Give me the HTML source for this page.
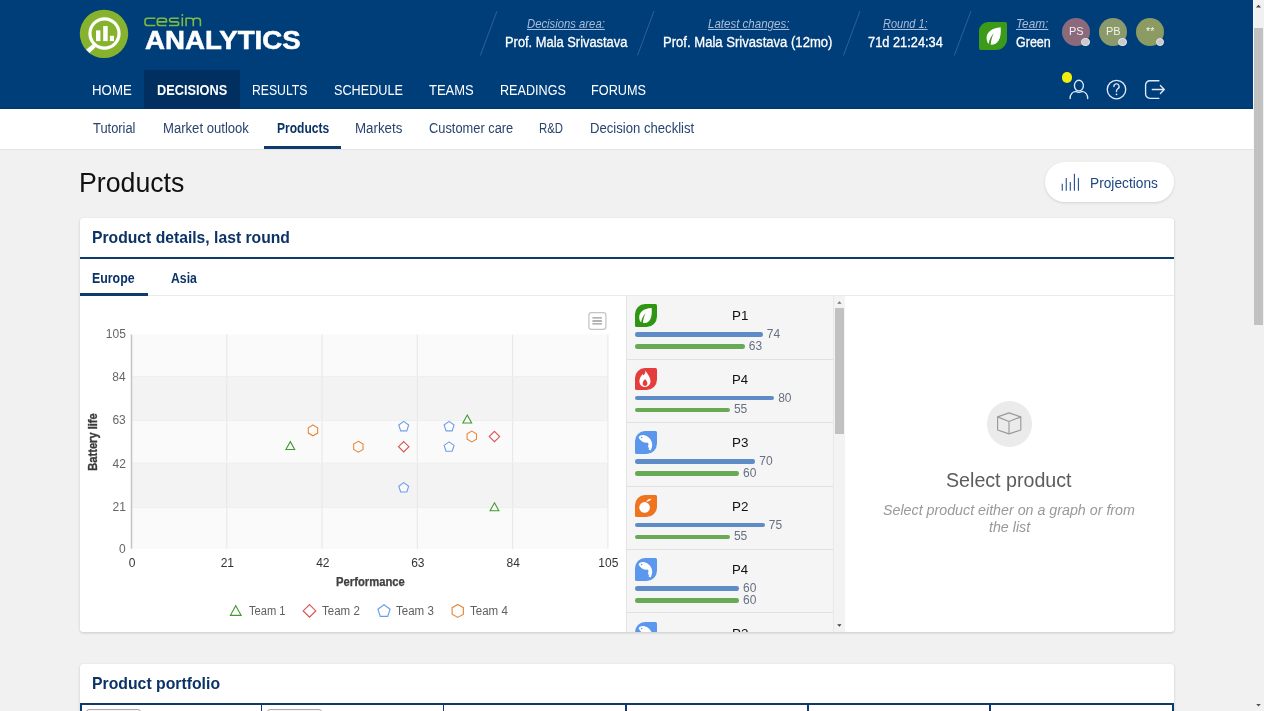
<!DOCTYPE html>
<html><head><meta charset="utf-8"><title>Products</title>
<style>
html,body{margin:0;padding:0}
body{width:1264px;height:711px;overflow:hidden;background:#f1f1f1;font-family:"Liberation Sans",sans-serif;position:relative}
.t{position:absolute;white-space:pre;line-height:1;z-index:5}
.a{position:absolute}
.card{position:absolute;background:#fff;border-radius:3px;box-shadow:0 1px 3px rgba(0,0,0,.16),0 0 1px rgba(0,0,0,.10)}
.it{position:absolute;left:0;width:206px;height:63.6px;background:#f5f5f5}
.sep{position:absolute;left:0;width:206px;top:62.75px;height:1.1px;background:#e1e1e1;z-index:3}
.ico{position:absolute;left:8px;top:8.4px;width:22px;height:22.5px;border-radius:10px 1.5px 10.5px 1.5px;overflow:hidden}
.ico svg{display:block}
.bar{position:absolute;left:8px;height:4.6px;border-radius:2.3px}
.av{position:absolute;border-radius:50%}
.dot{position:absolute;width:6.8px;height:6.8px;border-radius:50%;background:#cbc9c9;border:1.4px solid #e2e5ec}
#w{position:absolute;left:0;top:0;width:1264px;height:711px;overflow:hidden;will-change:transform}
</style></head><body>
<div id="w">
<!-- header -->
<div class="a" style="left:0;top:0;width:1253px;height:109px;background:#003e7a"></div>
<div class="a" style="left:0;top:108.2px;width:1253px;height:0.8px;background:#00336a"></div>
<div class="a" style="left:143.75px;top:70px;width:95.75px;height:39px;background:#012f60"></div>
<div class="a" style="left:0;top:109px;width:1253px;height:40px;background:#fff;box-shadow:0 1px 1px rgba(0,0,0,.05)"></div>
<div class="a" style="left:263.75px;top:146px;width:77.5px;height:3px;background:#0f3a6e"></div>
<!-- logo -->
<svg class="a" style="left:76px;top:6px" width="230" height="56" viewBox="76 6 230 56">
<circle cx="104" cy="33.85" r="24.2" fill="#86b22e"/>
<path d="M92.8 44.3L86.2 49.6L89.6 53L95.6 47.2Z" fill="#fff"/>
<circle cx="104.5" cy="33.5" r="14.55" fill="none" stroke="#fff" stroke-width="3.2"/>
<rect x="96" y="30.4" width="4.4" height="10.7" fill="#fff"/>
<rect x="103.2" y="26" width="4.5" height="15.1" fill="#fff"/>
<rect x="109.9" y="35.8" width="4.1" height="5.3" fill="#fff"/>
<g fill="none" stroke="#7cbb40" stroke-width="1.6" stroke-linecap="butt" stroke-linejoin="round">
<path d="M155.400 18.200H147.600a2.600 2.600 0 0 0-2.600 2.600v2.100a2.600 2.600 0 0 0 2.600 2.600H155.400"/>
<path d="M157.300 21.850H166.500V20.800a2.600 2.600 0 0 0-2.600-2.600h-4a2.600 2.600 0 0 0-2.600 2.600v2.100a2.600 2.600 0 0 0 2.600 2.600h6.600"/>
<path d="M178.800 18.200h-7.400a1.825 1.825 0 0 0 0 3.650h5.400a1.825 1.825 0 0 1 0 3.650h-7.800"/>
<path d="M182.300 17.400V26.300"/>
<path d="M186.100 26.300V18.200h4.700a2.500 2.500 0 0 1 2.500 2.500V26.300M193.300 20.700a2.500 2.500 0 0 1 2.500-2.500h2.100a2.500 2.500 0 0 1 2.500 2.500V26.300"/>
</g>
<circle cx="182.300" cy="14.900" r="1" fill="#7cbb40"/>
</svg>
<!-- separators -->
<svg class="a" style="left:470px;top:5px" width="520" height="60" viewBox="470 5 520 60">
<g stroke="#2f5f9a" stroke-width="1" fill="none">
<path d="M497 11L480.300 55.500"/><path d="M654 11L637.500 55.500"/><path d="M860 11L843.500 55.500"/><path d="M971 11L954.300 55.500"/>
</g></svg>
<!-- team leaf -->
<div class="a" style="left:978.7px;top:22.1px;width:28.2px;height:27.8px;background:#3c9a1a;border-radius:9px 2px 11px 2px"></div>
<svg class="a" style="left:978.7px;top:22.1px" width="28.2" height="27.8" viewBox="0 0 28.2 27.8">
<path d="M21.700 5.200C12.500 6 7.400 10.500 7.600 16.400c.1 2.200 .9 4.200 2 5.600 .7-4.400 2.600-8.200 5.400-11-1.900 3.300-3 7.200-3.300 11.700 6.800 .3 10.900-5.300 10-17.500z" fill="#fff"/>
</svg>
<!-- avatars -->
<div class="av" style="left:1061.7px;top:18px;width:27.9px;height:27.9px;background:#8b6a7b"></div>
<div class="av" style="left:1098.9px;top:18px;width:27.9px;height:27.9px;background:#8b9a6a"></div>
<div class="av" style="left:1136.1px;top:18px;width:27.9px;height:27.9px;background:#8b9b62"></div>
<div class="dot" style="left:1081.2px;top:37.6px"></div>
<div class="dot" style="left:1118.4px;top:37.6px"></div>
<div class="dot" style="left:1155.6px;top:37.6px"></div>
<!-- right icons -->
<div class="a" style="left:1061.7px;top:72.05px;width:10.5px;height:10.5px;border-radius:50%;background:#f1ee0c"></div>
<svg class="a" style="left:1060px;top:70px" width="112" height="36" viewBox="1060 70 112 36">
<g fill="none" stroke="#dfe9f8" stroke-width="1.350" stroke-linecap="round" stroke-linejoin="round">
<ellipse cx="1078.900" cy="85.600" rx="4.500" ry="5.300"/>
<path d="M1070.100 98.600c0-4.200 2.600-7 5.800-7.300 1 .8 2 1.100 3 1.100s2-.3 3-1.100c3.200 .3 5.800 3.100 5.800 7.300"/>
<circle cx="1116.500" cy="89.550" r="9.250"/>
<path d="M1113.900 86.500a2.600 2.600 0 1 1 3.900 2.250c-.9 .55-1.300 1.100-1.300 2.100v.6"/>
<path d="M1158.900 80.700h-9a4.300 4.300 0 0 0-4.300 4.300v9a4.300 4.300 0 0 0 4.300 4.300h9"/>
<path d="M1152.300 89.500h11.600M1160.400 85.500l3.900 4-3.900 4"/>
</g>
<circle cx="1116.500" cy="94.300" r=".9" fill="#dfe9f8"/>
</svg>
<!-- page scrollbar -->
<div class="a" style="left:1253px;top:0;width:11px;height:711px;background:#f1f1f1"></div>
<div class="a" style="left:1253px;top:0;width:1px;height:149px;background:#f9f9f9"></div>
<div class="a" style="left:1254.400px;top:27.600px;width:8.600px;height:297.200px;background:#c1c1c1"></div>
<svg class="a" style="left:1253px;top:0" width="11" height="711" viewBox="0 0 11 711"><path d="M3 7.400L5.500 4.700L8 7.400Z" fill="#404040"/><path d="M3.200 704L5.500 706.500L7.800 704Z" fill="#505050"/></svg>
<!-- projections button -->
<div class="a" style="left:1045px;top:162.250px;width:128.700px;height:40px;border-radius:20px;background:#fff;box-shadow:0 1px 3px rgba(0,0,0,.13)"></div>
<svg class="a" style="left:1058px;top:170px" width="24" height="24" viewBox="1058 170 24 24"><g stroke="#244f8a" stroke-width="1.100" fill="none">
<path d="M1062.250 183.800V190.700M1066.250 178V190.700M1070.300 181.900V190.700M1074.400 173.800V190.700M1078.400 178V190.700"/></g></svg>
<!-- card 1 -->
<div class="card" style="left:80px;top:217.600px;width:1093.600px;height:414px"></div>
<div class="a" style="left:80px;top:257px;width:1093.600px;height:2.200px;background:#0f3a6e"></div>
<div class="a" style="left:80px;top:295.100px;width:1093.600px;height:1px;background:#eaeaea"></div>
<div class="a" style="left:80px;top:293px;width:67.500px;height:2.600px;background:#0f3a6e"></div>
<div class="a" style="left:626px;top:296px;width:1px;height:335.600px;background:#e4e4e4"></div>
<!-- chart -->
<svg class="a" style="left:80px;top:296px" width="546" height="335" viewBox="80 296 546 335">
<rect x="131.5" y="334.5" width="476.75" height="42.0" fill="#fafafa"/>
<rect x="131.5" y="376.5" width="476.75" height="44.0" fill="#f3f3f3"/>
<rect x="131.5" y="420.5" width="476.75" height="42.5" fill="#fafafa"/>
<rect x="131.5" y="463" width="476.75" height="44.5" fill="#f3f3f3"/>
<rect x="131.5" y="507.5" width="476.75" height="41.25" fill="#fafafa"/>
<rect x="226.28" y="334.5" width="1" height="214.25" fill="#e7e7e7"/>
<rect x="321.56" y="334.5" width="1" height="214.25" fill="#e7e7e7"/>
<rect x="416.84" y="334.5" width="1" height="214.25" fill="#e7e7e7"/>
<rect x="512.12" y="334.5" width="1" height="214.25" fill="#e7e7e7"/>
<rect x="607.40" y="334.5" width="1" height="214.25" fill="#e7e7e7"/>
<rect x="131.5" y="376.0" width="476.75" height="1" fill="#efefef"/>
<rect x="131.5" y="420.0" width="476.75" height="1" fill="#efefef"/>
<rect x="131.5" y="462.5" width="476.75" height="1" fill="#efefef"/>
<rect x="131.5" y="507.0" width="476.75" height="1" fill="#efefef"/>
<rect x="130.75" y="334.5" width="1.5" height="214.25" fill="#c4c4c4"/>
<path d="M290.30 441.63L294.67 449.54L285.93 449.54Z" fill="#fff" fill-opacity="0.6" stroke="#3f9a2f" stroke-width="1.1" stroke-linejoin="miter"/>
<path d="M467.25 415.10L471.62 423.01L462.88 423.01Z" fill="#fff" fill-opacity="0.6" stroke="#3f9a2f" stroke-width="1.1" stroke-linejoin="miter"/>
<path d="M494.47 502.84L498.84 510.75L490.10 510.75Z" fill="#fff" fill-opacity="0.6" stroke="#3f9a2f" stroke-width="1.1" stroke-linejoin="miter"/>
<path d="M403.73 441.53L408.93 446.73L403.73 451.93L398.53 446.73Z" fill="#fff" fill-opacity="0.6" stroke="#d9534f" stroke-width="1.1"/>
<path d="M494.47 431.32L499.67 436.52L494.47 441.72L489.27 436.52Z" fill="#fff" fill-opacity="0.6" stroke="#d9534f" stroke-width="1.1"/>
<path d="M403.73 421.42L408.67 425.01L406.79 430.83L400.67 430.83L398.78 425.01Z" fill="#fff" fill-opacity="0.6" stroke="#6d9eeb" stroke-width="1.1"/>
<path d="M449.10 421.42L454.05 425.01L452.16 430.83L446.04 430.83L444.15 425.01Z" fill="#fff" fill-opacity="0.6" stroke="#6d9eeb" stroke-width="1.1"/>
<path d="M449.10 441.83L454.05 445.42L452.16 451.23L446.04 451.23L444.15 445.42Z" fill="#fff" fill-opacity="0.6" stroke="#6d9eeb" stroke-width="1.1"/>
<path d="M403.73 482.64L408.67 486.23L406.79 492.04L400.67 492.04L398.78 486.23Z" fill="#fff" fill-opacity="0.6" stroke="#6d9eeb" stroke-width="1.1"/>
<path d="M312.99 425.00L317.66 427.70L317.66 433.10L312.99 435.80L308.31 433.10L308.31 427.70Z" fill="#fff" fill-opacity="0.6" stroke="#e8873a" stroke-width="1.1"/>
<path d="M358.36 441.33L363.03 444.03L363.03 449.43L358.36 452.13L353.68 449.43L353.68 444.03Z" fill="#fff" fill-opacity="0.6" stroke="#e8873a" stroke-width="1.1"/>
<path d="M471.79 431.12L476.46 433.82L476.46 439.22L471.79 441.92L467.11 439.22L467.11 433.82Z" fill="#fff" fill-opacity="0.6" stroke="#e8873a" stroke-width="1.1"/>
<path d="M235.75 605.70L241.07 615.33L230.43 615.33Z" fill="#fff" fill-opacity="0.6" stroke="#3f9a2f" stroke-width="1.15" stroke-linejoin="miter"/>
<path d="M309.50 604.60L315.80 610.90L309.50 617.20L303.20 610.90Z" fill="#fff" fill-opacity="0.6" stroke="#d9534f" stroke-width="1.15"/>
<path d="M384.00 604.80L390.09 609.22L387.76 616.38L380.24 616.38L377.91 609.22Z" fill="#fff" fill-opacity="0.6" stroke="#6d9eeb" stroke-width="1.15"/>
<path d="M457.75 604.40L463.38 607.65L463.38 614.15L457.75 617.40L452.12 614.15L452.12 607.65Z" fill="#fff" fill-opacity="0.6" stroke="#e8873a" stroke-width="1.15"/>
<rect x="588.900" y="312.600" width="17" height="16.800" rx="2.600" fill="#fff" stroke="#c4c4c4" stroke-width="1.200"/>
<path d="M592.400 317.900h9.500M592.400 321h9.500M592.400 323.900h9.500" stroke="#999" stroke-width="1.300"/>
</svg>
<div class="t" style="left:92.8px;top:441.5px;width:0;height:0;overflow:visible"><span id="bl" style="position:absolute;white-space:pre;font-size:12px;font-weight:700;color:#3a3a3a;-webkit-text-stroke:0.35px #3a3a3a;line-height:1;transform:translate(-50%,-50%) rotate(-90deg) scaleX(0.925);display:block">Battery life</span></div>
<!-- list -->
<div class="a" style="left:627px;top:296px;width:206px;height:335.600px;overflow:hidden;background:#f5f5f5">
<div class="it" style="top:0.00px">
<div class="ico" style="background:#2e9612"><svg width="22" height="22.5" viewBox="0 0 22 22.5"><g transform="translate(-1.6,-1.1) scale(1.1)"><path d="M16.6 4.6C9 4.9 5.2 8.6 5.3 13.2c0 2 .8 3.600 1.700 4.600 .5-3.400 2-6.500 4.200-8.700-1.400 2.500-2.300 5.600-2.500 9.200 5.600 .6 8.800-3.800 7.900-13.700z" fill="#fff"/></g></svg></div>
<div class="bar" style="top:36.3px;width:127.5px;background:#5d8cc6"></div>
<div class="bar" style="top:48.4px;width:109.5px;background:#68aa54"></div>
</div>
<div class="it" style="top:63.45px">
<div class="ico" style="background:#e53c3c"><svg width="22" height="22.5" viewBox="0 0 22 22.5"><g transform="translate(-1.9,-1.0) scale(1.067,1.07)"><path d="M11.300 3.300c.6 2.300-.6 3.500-1.800 4.600l-.3-1.300C7.300 8.500 5.900 10.800 5.900 13.300c0 3.200 2.300 5.400 5.200 5.400s5.200-2.200 5.200-5.300c0-3.800-2.300-6.300-5-10.100z" fill="#fff"/><path d="M11.200 11.300c-1.500 1.800-2.200 2.700-2.200 4.100 0 1.300 1 2.300 2.200 2.300s2.200-1 2.200-2.300c0-1.400-.8-2.500-2.200-4.100z" fill="#e53c3c"/></g></svg></div>
<div class="bar" style="top:36.3px;width:138.8px;background:#5d8cc6"></div>
<div class="bar" style="top:48.4px;width:94.5px;background:#68aa54"></div>
</div>
<div class="it" style="top:126.90px">
<div class="ico" style="background:#5b97ec"><svg width="22" height="22.5" viewBox="0 0 22 22.5"><path d="M3.600 6.200C4.600 4.600 7 3.600 9.600 4.200C13.600 5.200 17 8.800 17.200 13.200C17.300 15.400 16.600 17.600 15.600 19.400L13.400 18.200L14.400 16.800L12.800 16.200C13.600 14.600 13.600 12.800 13 11.400C11.400 11.900 9.600 11.700 8 10.900C6 10 4.400 8.200 3.600 6.200Z" fill="#fff"/><circle cx="6.600" cy="6.500" r=".8" fill="#5b97ec"/></svg></div>
<div class="bar" style="top:36.3px;width:120.0px;background:#5d8cc6"></div>
<div class="bar" style="top:48.4px;width:103.8px;background:#68aa54"></div>
</div>
<div class="it" style="top:190.35px">
<div class="ico" style="background:#ee7420"><svg width="22" height="22.5" viewBox="0 0 22 22.5"><circle cx="9.600" cy="12.400" r="5.300" fill="#fff"/><path d="M11 6.800c1.400-2.400 3.400-3.200 5.400-3-1 1.700-2.700 3-5.400 3z" fill="#fff"/></svg></div>
<div class="bar" style="top:36.3px;width:129.5px;background:#5d8cc6"></div>
<div class="bar" style="top:48.4px;width:94.5px;background:#68aa54"></div>
</div>
<div class="it" style="top:253.80px">
<div class="ico" style="background:#5b97ec"><svg width="22" height="22.5" viewBox="0 0 22 22.5"><path d="M3.600 6.200C4.600 4.600 7 3.600 9.600 4.200C13.600 5.200 17 8.800 17.200 13.200C17.300 15.400 16.600 17.600 15.600 19.400L13.400 18.200L14.400 16.800L12.800 16.200C13.600 14.600 13.600 12.800 13 11.400C11.400 11.900 9.600 11.700 8 10.900C6 10 4.400 8.200 3.600 6.200Z" fill="#fff"/><circle cx="6.600" cy="6.500" r=".8" fill="#5b97ec"/></svg></div>
<div class="bar" style="top:36.3px;width:103.8px;background:#5d8cc6"></div>
<div class="bar" style="top:48.4px;width:103.8px;background:#68aa54"></div>
</div>
<div class="it" style="top:317.25px">
<div class="ico" style="background:#5b97ec"><svg width="22" height="22.5" viewBox="0 0 22 22.5"><path d="M3.600 6.200C4.600 4.600 7 3.600 9.600 4.200C13.600 5.200 17 8.800 17.200 13.200C17.300 15.400 16.600 17.600 15.600 19.400L13.400 18.200L14.400 16.800L12.800 16.200C13.600 14.600 13.600 12.800 13 11.400C11.400 11.900 9.600 11.700 8 10.900C6 10 4.400 8.200 3.600 6.200Z" fill="#fff"/><circle cx="6.600" cy="6.500" r=".8" fill="#5b97ec"/></svg></div>
<div class="bar" style="top:36.3px;width:112.3px;background:#5d8cc6"></div>
<div class="bar" style="top:48.4px;width:86.4px;background:#68aa54"></div>
</div>
<div class="sep" style="top:62.70px"></div>
<div class="sep" style="top:125.95px"></div>
<div class="sep" style="top:189.65px"></div>
<div class="sep" style="top:252.95px"></div>
<div class="sep" style="top:315.75px"></div>
<span class="t" style="left:104.64px;top:12.75px;font-size:13px;color:#111;transform:scaleX(1.0301);transform-origin:0 0;">P1</span>
<span class="t" style="left:139.78px;top:32.34px;font-size:12px;color:#667080;">74</span>
<span class="t" style="left:121.78px;top:44.04px;font-size:12px;color:#667080;">63</span>
<span class="t" style="left:104.66px;top:77.00px;font-size:13px;color:#111;transform:scaleX(1.0122);transform-origin:0 0;">P4</span>
<span class="t" style="left:151.15px;top:95.79px;font-size:12px;color:#667080;">80</span>
<span class="t" style="left:106.90px;top:107.49px;font-size:12px;color:#667080;">55</span>
<span class="t" style="left:104.64px;top:140.45px;font-size:13px;color:#111;transform:scaleX(1.0301);transform-origin:0 0;">P3</span>
<span class="t" style="left:132.28px;top:159.24px;font-size:12px;color:#667080;">70</span>
<span class="t" style="left:116.03px;top:170.94px;font-size:12px;color:#667080;">60</span>
<span class="t" style="left:104.64px;top:203.90px;font-size:13px;color:#111;transform:scaleX(1.0301);transform-origin:0 0;">P2</span>
<span class="t" style="left:141.78px;top:222.69px;font-size:12px;color:#667080;">75</span>
<span class="t" style="left:106.90px;top:234.39px;font-size:12px;color:#667080;">55</span>
<span class="t" style="left:104.66px;top:267.35px;font-size:13px;color:#111;transform:scaleX(1.0122);transform-origin:0 0;">P4</span>
<span class="t" style="left:116.03px;top:286.14px;font-size:12px;color:#667080;">60</span>
<span class="t" style="left:116.03px;top:297.84px;font-size:12px;color:#667080;">60</span>
<span class="t" style="left:104.64px;top:330.80px;font-size:13px;color:#111;transform:scaleX(1.0301);transform-origin:0 0;">P2</span>
<span class="t" style="left:124.58px;top:349.59px;font-size:12px;color:#667080;">65</span>
<span class="t" style="left:98.80px;top:361.29px;font-size:12px;color:#667080;">50</span>
</div>
<div class="a" style="left:833px;top:296px;width:12.200px;height:335.600px;background:#f3f3f3;border-left:0.6px solid #e8e8e8;box-sizing:border-box"></div>
<div class="a" style="left:835.400px;top:307.700px;width:8.900px;height:126.800px;background:#c1c1c1"></div>
<svg class="a" style="left:833px;top:296px" width="12.200" height="335.600" viewBox="0 0 12.200 335.600"><path d="M4.200 7.500L6.400 5.100L8.600 7.500Z" fill="#707070"/><path d="M4.200 328.400L6.400 330.800L8.600 328.400Z" fill="#404040"/></svg>
<!-- right panel -->
<div class="a" style="left:986.700px;top:401.400px;width:45.300px;height:45.300px;border-radius:50%;background:#ebebeb"></div>
<svg class="a" style="left:990px;top:405px" width="40" height="40" viewBox="990 405 40 40"><g fill="none" stroke="#9a9a9a" stroke-width="1.150" stroke-linejoin="round">
<path d="M1009 412.900L1020.800 416.900V430L1009 433.900L997.600 430V416.900Z"/><path d="M997.600 416.900L1009 421.500L1020.800 416.900M1009 421.500V433.900"/></g></svg>
<!-- card 2 -->
<div class="card" style="left:80px;top:664px;width:1093.600px;height:80px;border-radius:3px 3px 0 0"></div>
<div class="a" style="left:80px;top:703px;width:1093.600px;height:2px;background:#0f3a6e"></div>
<div class="a" style="left:80.00px;top:703px;width:1.8px;height:10px;background:#0f3a6e"></div>
<div class="a" style="left:260.60px;top:703px;width:1.8px;height:10px;background:#0f3a6e"></div>
<div class="a" style="left:442.70px;top:703px;width:1.8px;height:10px;background:#0f3a6e"></div>
<div class="a" style="left:624.90px;top:703px;width:1.8px;height:10px;background:#0f3a6e"></div>
<div class="a" style="left:807.10px;top:703px;width:1.8px;height:10px;background:#0f3a6e"></div>
<div class="a" style="left:989.40px;top:703px;width:1.8px;height:10px;background:#0f3a6e"></div>
<div class="a" style="left:1171.75px;top:703px;width:1.8px;height:10px;background:#0f3a6e"></div>
<div class="a" style="left:86.250px;top:708.700px;width:53px;height:10px;border:1px solid #aaa;border-radius:3px;background:#f6f6f6"></div>
<div class="a" style="left:266.750px;top:708.700px;width:53px;height:10px;border:1px solid #aaa;border-radius:3px;background:#f6f6f6"></div>
<!-- texts -->
<span class="t" style="left:144.64px;top:28.24px;font-size:25.7px;color:#fff;font-weight:700;transform:scaleX(1.0762);transform-origin:0 0;-webkit-text-stroke:0.55px #fff;">ANALYTICS</span>
<span class="t" style="left:91.71px;top:82.73px;font-size:14.5px;color:#fff;transform:scaleX(0.9141);transform-origin:0 0;">HOME</span>
<span class="t" style="left:156.97px;top:82.73px;font-size:14.5px;color:#fff;font-weight:700;transform:scaleX(0.8792);transform-origin:0 0;">DECISIONS</span>
<span class="t" style="left:251.80px;top:82.73px;font-size:14.5px;color:#fff;transform:scaleX(0.8423);transform-origin:0 0;">RESULTS</span>
<span class="t" style="left:334.19px;top:82.73px;font-size:14.5px;color:#fff;transform:scaleX(0.8734);transform-origin:0 0;">SCHEDULE</span>
<span class="t" style="left:429.01px;top:82.73px;font-size:14.5px;color:#fff;transform:scaleX(0.8962);transform-origin:0 0;">TEAMS</span>
<span class="t" style="left:499.51px;top:82.73px;font-size:14.5px;color:#fff;transform:scaleX(0.8704);transform-origin:0 0;">READINGS</span>
<span class="t" style="left:591.26px;top:82.73px;font-size:14.5px;color:#fff;transform:scaleX(0.8756);transform-origin:0 0;">FORUMS</span>
<span class="t" style="left:93.00px;top:121.40px;font-size:14px;color:#27446f;transform:scaleX(0.9203);transform-origin:0 0;">Tutorial</span>
<span class="t" style="left:162.80px;top:121.40px;font-size:14px;color:#27446f;transform:scaleX(0.9357);transform-origin:0 0;">Market outlook</span>
<span class="t" style="left:276.99px;top:121.40px;font-size:14px;color:#0c3367;font-weight:700;transform:scaleX(0.8592);transform-origin:0 0;">Products</span>
<span class="t" style="left:354.78px;top:121.40px;font-size:14px;color:#27446f;transform:scaleX(0.9517);transform-origin:0 0;">Markets</span>
<span class="t" style="left:428.66px;top:121.40px;font-size:14px;color:#27446f;transform:scaleX(0.9177);transform-origin:0 0;">Customer care</span>
<span class="t" style="left:539.19px;top:121.40px;font-size:14px;color:#27446f;transform:scaleX(0.8126);transform-origin:0 0;">R&amp;D</span>
<span class="t" style="left:589.55px;top:121.40px;font-size:14px;color:#27446f;transform:scaleX(0.9368);transform-origin:0 0;">Decision checklist</span>
<span class="t" style="left:527.02px;top:17.00px;font-size:13px;color:#a9bdd9;font-style:italic;transform:scaleX(0.8682);transform-origin:0 0;text-decoration:underline;text-underline-offset:0.7px;text-decoration-thickness:0.9px;">Decisions area:</span>
<span class="t" style="left:504.57px;top:35.15px;font-size:14px;color:#fff;transform:scaleX(0.9198);transform-origin:0 0;-webkit-text-stroke:0.3px #fff;">Prof. Mala Srivastava</span>
<span class="t" style="left:707.52px;top:17.00px;font-size:13px;color:#a9bdd9;font-style:italic;transform:scaleX(0.8864);transform-origin:0 0;text-decoration:underline;text-underline-offset:0.7px;text-decoration-thickness:0.9px;">Latest changes:</span>
<span class="t" style="left:663.05px;top:35.15px;font-size:14px;color:#fff;transform:scaleX(0.9347);transform-origin:0 0;-webkit-text-stroke:0.3px #fff;">Prof. Mala Srivastava (12mo)</span>
<span class="t" style="left:883.28px;top:17.00px;font-size:13px;color:#a9bdd9;font-style:italic;transform:scaleX(0.8443);transform-origin:0 0;text-decoration:underline;text-underline-offset:0.7px;text-decoration-thickness:0.9px;">Round 1:</span>
<span class="t" style="left:868.41px;top:35.15px;font-size:14px;color:#fff;transform:scaleX(0.9153);transform-origin:0 0;-webkit-text-stroke:0.3px #fff;">71d 21:24:34</span>
<span class="t" style="left:1015.83px;top:17.00px;font-size:13px;color:#a9bdd9;font-style:italic;transform:scaleX(0.9059);transform-origin:0 0;text-decoration:underline;text-underline-offset:0.7px;text-decoration-thickness:0.9px;">Team:</span>
<span class="t" style="left:1016.18px;top:35.15px;font-size:14px;color:#fff;transform:scaleX(0.8940);transform-origin:0 0;-webkit-text-stroke:0.3px #fff;">Green</span>
<span class="t" style="left:1069.10px;top:26.37px;font-size:11.5px;color:#f3eef0;transform:scaleX(0.9527);transform-origin:0 0;">PS</span>
<span class="t" style="left:1106.30px;top:26.37px;font-size:11.5px;color:#f3f3ea;transform:scaleX(0.9527);transform-origin:0 0;">PB</span>
<span class="t" style="left:1145.82px;top:26.07px;font-size:11.5px;color:#f3f3ea;transform:scaleX(0.9294);transform-origin:0 0;">**</span>
<span class="t" style="left:79.40px;top:169.30px;font-size:28px;color:#111;transform:scaleX(0.9538);transform-origin:0 0;">Products</span>
<span class="t" style="left:1089.50px;top:175.55px;font-size:14px;color:#1d4680;transform:scaleX(0.9804);transform-origin:0 0;">Projections</span>
<span class="t" style="left:91.56px;top:228.61px;font-size:17px;color:#0c3367;font-weight:700;transform:scaleX(0.9230);transform-origin:0 0;">Product details, last round</span>
<span class="t" style="left:92.47px;top:270.65px;font-size:14px;color:#0c3367;font-weight:700;transform:scaleX(0.8834);transform-origin:0 0;">Europe</span>
<span class="t" style="left:171.27px;top:270.65px;font-size:14px;color:#0c3367;font-weight:700;transform:scaleX(0.8735);transform-origin:0 0;">Asia</span>
<span class="t" style="left:91.81px;top:675.11px;font-size:17px;color:#0c3367;font-weight:700;transform:scaleX(0.9287);transform-origin:0 0;">Product portfolio</span>
<span class="t" style="left:119.05px;top:542.74px;font-size:12px;color:#666;">0</span>
<span class="t" style="left:128.72px;top:557.24px;font-size:12px;color:#333;">0</span>
<span class="t" style="left:112.55px;top:500.99px;font-size:12px;color:#666;">21</span>
<span class="t" style="left:220.69px;top:557.24px;font-size:12px;color:#333;">21</span>
<span class="t" style="left:112.55px;top:457.99px;font-size:12px;color:#666;">42</span>
<span class="t" style="left:316.16px;top:557.24px;font-size:12px;color:#333;">42</span>
<span class="t" style="left:112.42px;top:413.99px;font-size:12px;color:#666;">63</span>
<span class="t" style="left:411.19px;top:557.24px;font-size:12px;color:#333;">63</span>
<span class="t" style="left:112.30px;top:371.49px;font-size:12px;color:#666;">84</span>
<span class="t" style="left:506.47px;top:557.24px;font-size:12px;color:#333;">84</span>
<span class="t" style="left:105.80px;top:328.24px;font-size:12px;color:#666;">105</span>
<span class="t" style="left:598.31px;top:557.24px;font-size:12px;color:#333;">105</span>
<span class="t" style="left:336.15px;top:575.74px;font-size:12px;color:#404040;font-weight:700;transform:scaleX(0.9384);transform-origin:0 0;-webkit-text-stroke:0.25px #404040;">Performance</span>
<span class="t" style="left:248.63px;top:604.72px;font-size:12.5px;color:#606060;transform:scaleX(0.8922);transform-origin:0 0;">Team 1</span>
<span class="t" style="left:322.37px;top:604.72px;font-size:12.5px;color:#606060;transform:scaleX(0.9234);transform-origin:0 0;">Team 2</span>
<span class="t" style="left:396.12px;top:604.72px;font-size:12.5px;color:#606060;transform:scaleX(0.9234);transform-origin:0 0;">Team 3</span>
<span class="t" style="left:470.12px;top:604.72px;font-size:12.5px;color:#606060;transform:scaleX(0.9238);transform-origin:0 0;">Team 4</span>
<span class="t" style="left:946.13px;top:470.32px;font-size:20.3px;color:#5c5c5c;transform:scaleX(0.9683);transform-origin:0 0;">Select product</span>
<span class="t" style="left:883.38px;top:501.55px;font-size:15px;color:#999;font-style:italic;transform:scaleX(0.9500);transform-origin:0 0;">Select product either on a graph or from</span>
<span class="t" style="left:988.51px;top:519.30px;font-size:15px;color:#999;font-style:italic;transform:scaleX(0.9491);transform-origin:0 0;">the list</span>
</div>
</body></html>
